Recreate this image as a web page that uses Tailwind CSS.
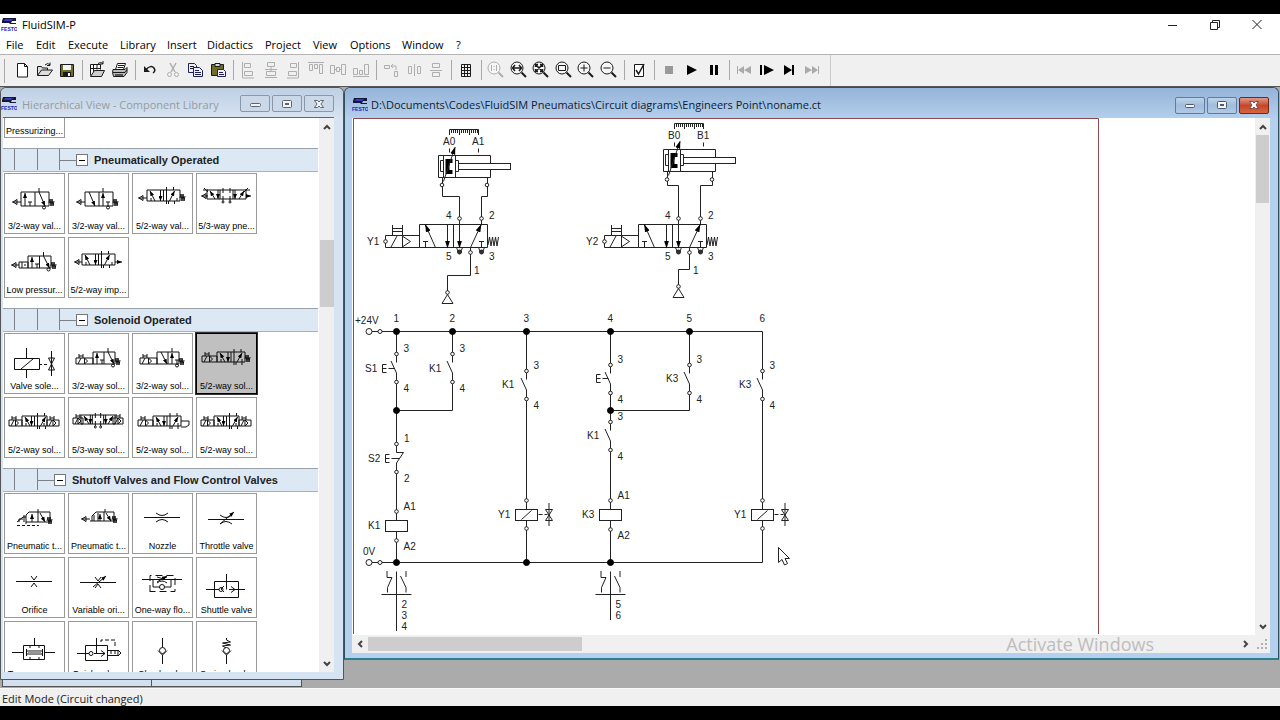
<!DOCTYPE html>
<html lang="en">
<head>
<meta charset="utf-8">
<title>FluidSIM-P</title>
<script src="https://cdn.jsdelivr.net/npm/@tailwindcss/browser@4"></script>
</head>
<body class="flex h-screen flex-col overflow-hidden bg-black py-[14px] font-['Open_Sans','Noto_Sans',sans-serif] text-[11px] leading-4 text-[#222]">

<svg class="absolute size-0">
  <defs>
    <symbol id="logo" viewBox="0 0 16 16">
      <path d="M2 1H15V4H11L10 6H15V7H9L8 6H1V4Z" fill="#16163c"/>
      <path d="M4 2H12L10 4H3Z" fill="#3a3ab8"/>
      <text x="0" y="14" font-family="Liberation Sans, sans-serif" font-size="5" font-weight="700" fill="#2020c8">FESTO</text>
    </symbol>
    <marker id="arr" viewBox="0 0 8 6" refX="7" refY="3" markerWidth="8" markerHeight="6" markerUnits="userSpaceOnUse" orient="auto"><path d="M0 0.500L8 3L0 5.500Z" fill="#000" stroke="none"/></marker>
    <marker id="tip" viewBox="0 0 5 4" refX="5" refY="2" markerWidth="5" markerHeight="4" markerUnits="userSpaceOnUse" orient="auto"><path d="M0 0L5 2L0 4Z" fill="#000" stroke="none"/></marker>
  </defs>
</svg>

<header class="flex h-[21px] shrink-0 items-center bg-white pl-[1px]">
  <svg class="size-4 shrink-0"><use href="#logo"/></svg>
  <h1 class="ml-[5px] flex-1 text-black">FluidSIM-P</h1>
  <div class="flex gap-[28px] pr-[16px] text-[#222]">
    <button aria-label="Minimize" class="size-[14px]"><svg viewBox="0 0 14 14" class="size-[14px]"><path d="M2 7.500H11" stroke="currentColor"/></svg></button>
    <button aria-label="Restore" class="size-[14px]"><svg viewBox="0 0 14 14" class="size-[14px]" fill="none" stroke="currentColor"><path d="M2.500 4.500h7v7h-7zM4.500 4V2.500h7v7H10"/></svg></button>
    <button aria-label="Close" class="size-[14px]"><svg viewBox="0 0 14 14" class="size-[14px]" fill="none" stroke="currentColor"><path d="M2.500 2l9 9M11.500 2l-9 9"/></svg></button>
  </div>
</header>

<nav class="flex h-[19px] shrink-0 items-center bg-white pl-[6px] text-black" id="menu"></nav>

<div class="flex h-[33px] shrink-0 items-center border-t border-b border-t-[#b4b4b4] border-b-[#555] bg-[#f0f0f0] pl-1" role="toolbar" aria-label="Tools">
  <div class="h-6 w-px bg-[#a8a8a8]"></div>
  <div id="tools" class="ml-[6px] flex h-full items-center pb-[2px]"></div>
  <div class="ml-[7px] h-full w-px bg-[#ccc]"></div>
</div>

<main class="relative min-h-0 flex-1 bg-[#ababab]">
  <div class="absolute bottom-[1px] left-[2px] flex h-2">
    <div class="w-[150px] border border-[#555] bg-[#d3e0f0]"></div>
    <div class="w-[150px] border border-l-0 border-[#555] bg-[#d3e0f0]"></div>
  </div>

  <section class="absolute bottom-2 left-0 top-0 flex w-[344px] flex-col rounded-t-md border border-[#555] bg-[#d6e3f2] pb-[7px] pl-[2px] pr-[9px]">
    <div class="-ml-[2px] -mr-[9px] flex h-[29px] shrink-0 items-center rounded-t-md bg-linear-to-b from-[#bfd0e4] to-[#d5e2f0] pr-[9px]">
      <svg class="mt-[2px] size-4 shrink-0"><use href="#logo"/></svg>
      <h2 class="ml-[5px] mt-1 flex-1 whitespace-nowrap text-[#969ba3]">Hierarchical View - Component Library</h2>
      <div class="mt-[2px] flex gap-[2px] text-[#5a6472]">
        <button aria-label="Minimize" class="flex h-[17px] w-[30px] items-center justify-center rounded-xs border border-[#8a98aa] bg-[#cbd8e8]"><svg class="h-3 w-4" viewBox="0 0 16 12" fill="#f4f4f4" stroke="currentColor"><rect x="3.500" y="5.500" width="10" height="3" rx="1"/></svg></button>
        <button aria-label="Maximize" class="flex h-[17px] w-[30px] items-center justify-center rounded-xs border border-[#8a98aa] bg-[#cbd8e8]"><svg class="h-3 w-4" viewBox="0 0 16 12" fill="#f4f4f4" stroke="currentColor"><rect x="3.500" y="2.500" width="9" height="7" rx="1"/><rect x="6.500" y="5.500" width="3" height="1"/></svg></button>
        <button aria-label="Close" class="flex h-[17px] w-[30px] items-center justify-center rounded-xs border border-[#8a98aa] bg-[#cbd8e8]"><svg class="h-3 w-4" viewBox="0 0 16 12" fill="#f4f4f4" stroke="currentColor"><path d="M3.500 2.500h3l1.500 1.500 1.500-1.500h3L10 6l2.500 3.500h-3L8 8 6.500 9.500h-3L6 6z"/></svg></button>
      </div>
    </div>
    <div class="flex min-h-0 flex-1 border-t border-t-[#666] bg-white">
      <div id="library" class="min-w-0 flex-1 overflow-hidden"></div>
      <div class="flex w-[15px] shrink-0 flex-col items-center bg-[#f0f0f0] text-[#444]">
        <button aria-label="Scroll up" class="flex h-[17px] items-center"><svg class="h-2 w-2" viewBox="0 0 8 8" fill="none" stroke="currentColor" stroke-width="2"><path d="M1 6l3-3 3 3"/></svg></button>
        <div class="mt-[105px] h-[67px] w-[14px] bg-[#cdcdcd]"></div>
        <button aria-label="Scroll down" class="mt-auto flex h-[17px] items-center"><svg class="h-2 w-2" viewBox="0 0 8 8" fill="none" stroke="currentColor" stroke-width="2"><path d="M1 2l3 3 3-3"/></svg></button>
      </div>
    </div>
  </section>

  <section class="absolute bottom-[28px] left-[344px] right-[1px] top-0 flex flex-col rounded-t-md border border-b-2 border-[#31505c] border-b-[#2c7f8c] bg-[#b5d0ee] pb-[5px] pl-[7px] pr-[8px]">
    <div class="-ml-[7px] -mr-[8px] flex h-[30px] shrink-0 items-center rounded-t-md bg-linear-to-b from-[#94b3d8] to-[#b4cfec] pl-[7px] pr-[9px]">
      <svg class="mt-1 size-4 shrink-0"><use href="#logo"/></svg>
      <h2 class="ml-[3px] mt-1 flex-1 whitespace-nowrap text-[#101c30]">D:\Documents\Codes\FluidSIM Pneumatics\Circuit diagrams\Engineers Point\noname.ct</h2>
      <div class="mt-1 flex gap-[2px] text-[#4a5a70]">
        <button aria-label="Minimize" class="flex h-[17px] w-[30px] items-center justify-center rounded-xs border border-[#5f7c9e] bg-linear-to-b from-[#bdd3ea] via-[#a0bddc] to-[#b0cae6]"><svg class="h-3 w-4" viewBox="0 0 16 12" fill="#f4f4f4" stroke="currentColor"><rect x="3.500" y="5.500" width="9" height="3" rx="1"/></svg></button>
        <button aria-label="Maximize" class="flex h-[17px] w-[30px] items-center justify-center rounded-xs border border-[#5f7c9e] bg-linear-to-b from-[#bdd3ea] via-[#a0bddc] to-[#b0cae6]"><svg class="h-3 w-4" viewBox="0 0 16 12" fill="#f4f4f4" stroke="currentColor"><rect x="3.500" y="2.500" width="9" height="7" rx="1"/><rect x="6.500" y="5.500" width="3" height="1"/></svg></button>
        <button aria-label="Close" class="flex h-[17px] w-[30px] items-center justify-center rounded-xs border border-[#702818] bg-linear-to-b from-[#e0988a] via-[#c84428] to-[#d8663f]"><svg class="h-3 w-4" viewBox="0 0 16 12" fill="#fff" stroke="#7a4a48"><path d="M3.500 2.500h3l1.500 1.500 1.500-1.500h3L10 6l2.500 3.500h-3L8 8 6.500 9.500h-3L6 6z"/></svg></button>
      </div>
    </div>
    <div class="flex min-h-0 flex-1 bg-white">
      <div class="min-w-0 flex-1 overflow-hidden" id="canvas"></div>
      <div class="flex w-[15px] shrink-0 flex-col items-center bg-[#f0f0f0] text-[#444]">
        <button aria-label="Scroll up" class="flex h-[17px] items-center"><svg class="h-2 w-2" viewBox="0 0 8 8" fill="none" stroke="currentColor" stroke-width="2"><path d="M1 6l3-3 3 3"/></svg></button>
        <div class="h-[68px] w-[13px] bg-[#cdcdcd]"></div>
        <button aria-label="Scroll down" class="mt-auto flex h-4 items-center"><svg class="h-2 w-2" viewBox="0 0 8 8" fill="none" stroke="currentColor" stroke-width="2"><path d="M1 2l3 3 3-3"/></svg></button>
      </div>
    </div>
    <div class="relative flex h-[18px] shrink-0 items-center bg-[#f0f0f0] text-[#444]">
      <button aria-label="Scroll left" class="flex w-4 justify-center"><svg class="h-2 w-2" viewBox="0 0 8 8" fill="none" stroke="currentColor" stroke-width="2"><path d="M6 1L3 4l3 3"/></svg></button>
      <div class="h-[14px] w-[214px] bg-[#cdcdcd]"></div>
      <button aria-label="Scroll right" class="ml-auto flex w-4 justify-center"><svg class="h-2 w-2" viewBox="0 0 8 8" fill="none" stroke="currentColor" stroke-width="2"><path d="M2 1l3 3-3 3"/></svg></button>
      <svg class="ml-[2px] h-3 w-[14px]" viewBox="0 0 14 12" fill="#b0b0b0"><path d="M9 1h2v2H9zM9 5h2v2H9zM9 9h2v2H9zM5 5h2v2H5zM5 9h2v2H5zM1 9h2v2H1z"/></svg>
      <p class="absolute right-[116px] top-[-3px] whitespace-nowrap text-[18px] leading-6 text-[#bdbdbd]">Activate Windows</p>
    </div>
  </section>
</main>

<footer class="flex h-[18px] shrink-0 items-center border-t border-[#fafafa] bg-[#f0f0f0] pl-[2px] pt-[3px] text-[#222]">Edit Mode (Circuit changed)</footer>

<script>
// ---------- menu ----------
const menu = [['File',30],['Edit',32],['Execute',52],['Library',47],['Insert',40],['Didactics',58],['Project',48],['View',37],['Options',52],['Window',54],['?',12]];
document.getElementById('menu').innerHTML = menu.map(([t, w]) =>
  `<button class="shrink-0 whitespace-nowrap text-left" style="width:${w}px">${t}</button>`).join('');

// ---------- toolbar ----------
const K = '#1a1a1a', G = '#aeaeae';
const s = (d, c = K, f = 'none', w = 1) => `<path d="${d}" stroke="${c}" fill="${f}" stroke-width="${w}"/>`;
const f = (d, c = K) => `<path d="${d}" fill="${c}"/>`;
const zoom = (inner, c = K) => `<circle cx="7" cy="7" r="6" stroke="${c}" fill="#f6f6f6"/>` + s('M11.500 11.500L16 16', c, 'none', 2) + inner;
const groups = [
  [['New', s('M4.500 2.500h7l3 3v10.500h-10zM11.500 2.500v3h3', K, '#fff')],
   ['Open', s('M1.500 14.500v-9h4l1 1.500h5v2M1.500 14.500l4-5.500h11l-4 5.500z', K, '#ddd') + s('M9 4q3-3 5 0M14 1.500V4.500H11')],
   ['Save', s('M2.500 3.500h13v12h-13z', K, '#6e6e2a') + f('M5 4h8v5H5z', '#f4f4f4') + f('M5 11h8v5H5z') + f('M10 12h2v3h-2z', '#fff')]],
  [['Preview', s('M2.500 14.500v-11h10v5M5.500 3.500v8M9 3.500v5M2.500 7.500h10', K, '#fff') + s('M2.500 15.500l4-6h10l-3 6z', K, '#ccc') + s('M10 2.500q3-2 5 0M15 0v3h-3')],
   ['Print', s('M4.500 8.500l2-6h8l-2 6', K, '#fff') + s('M2 8.500h12l2-2v5l-3 4H2.500l-1-4z', K, '#bbb') + s('M7 4.500h6M6.500 6.500h6M2 11.500h12M14 11.500l2-3') + f('M4 13h8v2H4z', '#555')]],
  [['Undo', s('M5 8.500q5-5 8-1.500q2 3-1 5', K, 'none', 1.500) + f('M3 5v6h6z')],
   ['Cut', s('M6 2l5 9M12 2L7 11', G, 'none', 1.500) + `<circle cx="5.500" cy="13.500" r="2" fill="none" stroke="${G}"/><circle cx="12.500" cy="13.500" r="2" fill="none" stroke="${G}"/>`],
   ['Copy', s('M2.500 2.500h6l2 2v7h-8z', '#22225a', '#eef') + s('M4 5.500h4M4 7.500h5') + s('M7.500 6.500h6l3 3v6h-9z', '#22225a', '#eef') + s('M9 9.500h4M9 11.500h6M9 13.500h6', '#22225a')],
   ['Paste', s('M2.500 3.500h12v11h-12z', K, '#6e6e2a') + s('M6 2.500h5v3H6z', K, '#ddd') + s('M8.500 8.500h6l2 2v5h-8z', '#22225a', '#eef') + s('M10 11.500h4M10 13.500h5', '#22225a')]],
  [['Align left', s('M3.500 1v16H15M5.500 2.500h6v4h-6zM5.500 10.500h8v4h-8z', G)],
   ['Align centre', s('M5.500 1.500h7v4h-7zM4.500 10.500h9v4h-9zM9 6v4M3 8.500h12M3 16.500h12', G)],
   ['Align right', s('M14.500 1v16H3M6.500 2.500h6v4h-6zM4.500 10.500h8v4h-8z', G)],
   ['Align top', s('M1 1.500h16M2.500 3.500h3v6h-3zM7.500 3.500h3v4h-3zM12.500 3.500h3v9h-3z', G)],
   ['Align middle', s('M1.500 4.500h4v8h-4zM7.500 6.500h3v4h-3zM12.500 3.500h4v10h-4zM6 8.500h1M11 8.500h1', G)],
   ['Align bottom', s('M1 15.500h16M1.500 7.500h4v6h-4zM7.500 9.500h3v4h-3zM12.500 3.500h4v10h-4z', G)]],
  [['Rotate', s('M2.500 4.500h5v3h-5zM12.500 10.500h3v5h-3zM9 5h5v4M11 3L9 5l2 2', G)],
   ['Mirror vertical', s('M3.500 5.500h3v7h-3zM12.500 5.500h3v7h-3zM9.500 3v12', G)],
   ['Mirror horizontal', s('M5.500 2.500h7v4h-7zM5.500 11.500h7v4h-7zM3 9.500h12', G)]],
  [['Grid', s('M4.500 3.500h9v12h-9zM4.500 6.500h9M4.500 9.500h9M4.500 12.500h9M7.500 3.500v12M10.500 3.500v12')]],
  [['Zoom 1:1', zoom(s('M4.500 4v6M9.500 4v6M7 5v1M7 8v1', G), G)],
   ['Zoom previous', zoom(s('M3 7h8M5 4L2.500 7 5 10M9 4l2.500 3L9 10', K, 'none', 1.500))],
   ['Fit window', zoom(s('M4 4l6 6M10 4l-6 6M3.500 6V3.500H6M8 3.500h2.500V6M10.500 8v2.500H8M6 10.500H3.500V8', K, 'none', 1.500))],
   ['Zoom region', zoom(s('M3.500 4.500h7v5h-7z'))],
   ['Zoom in', zoom(s('M3.500 7h7M7 3.500v7'))],
   ['Zoom out', zoom(s('M3.500 7h7'))]],
  [['Check', s('M4.500 3.500h9v12h-9z', K, '#fff') + s('M6 9l2.500 4L14 3', K, 'none', 1.500)]],
  [['Stop', f('M5 5h8v8H5z', '#999')], ['Start', f('M4 4l10 5-10 5z', '#000')], ['Pause', f('M5 4h3v10H5zM10 4h3v10h-3z', '#000')]],
  [['Rewind', f('M2 5h1v8H2zM3 9l6-4v8zM9 9l7-4v8z', '#aaa')], ['Step', f('M2 4h2v10H2zM6 4l10 5-10 5z', '#000')],
   ['Next', f('M4 4l8 5-8 5zM12 4h2v10h-2z', '#000')], ['End', f('M2 5l7 4-7 4zM9 5l6 4-6 4zM15 5h1v8h-1z', '#aaa')]],
];
const gw = { 1: 22, 2: 45, 3: 67, 4: 90, 6: 135 };
document.getElementById('tools').innerHTML = groups.map(g =>
  `<div class="flex justify-between" style="width:${gw[g.length]}px">` + g.map(([n, p]) =>
    `<button aria-label="${n}" class="flex h-6 w-[22px] items-center justify-center"><svg class="size-[18px]" viewBox="0 0 18 18">${p}</svg></button>`).join('') + '</div>'
).join('<div class="flex w-2 justify-center"><div class="h-5 w-px bg-[#a8a8a8]"></div></div>');

// ---------- valve symbols for the library thumbnails ----------
const box = (x, y, w, h) => `M${x} ${y}h${w}v${h}h${-w}z`;
const P = d => `<path d="${d}"/>`;
const A = d => `<path d="${d}" marker-end="url(#tip)"/>`;
const spring = (x, y) => P(`M${x} ${y}l1-4 1 7 1-7 1 7 1-5`);
const pilot = (x, y, w) => P(`M${x - w} ${y}h${w}M${x - w + 1} ${y}l4-2.500v5z`);
const sol = (x, y, w) => P(box(x, y, w, 6) + `M${x + 2} ${y + 6}l3-6M${x + w / 2} ${y}v6l3-3-3-3M${x + 3} ${y}v-4M${x + 7} ${y}v-4M${x + 3} ${y - 2}h4`);
const two = (x, y, w, h, flip) => { const m = x + w / 2, a = flip ? m : x, b = flip ? x : m;
  return P(box(x, y, w, h) + `M${m} ${y}v${h}M${m + 4} ${y - 4}v4M${a + 9} ${y + h}v-4m-2 0h4`) + A(`M${a + 4} ${y + h}V${y + 1}`) + A(`M${b + 4} ${y}L${b + 10} ${y + h}`) +
    `<circle cx="${m + 9}" cy="${y + h + 1.500}" r="1.500"/>`; };
const five = (x, y, w, h) => { const m = x + w / 2;
  return P(box(x, y, w, h) + `M${m} ${y}v${h}M${m + 3} ${y - 3}v${h + 6}M${m + 10} ${y - 3}v3M${m + 5} ${y + h}v3M${m + 11} ${y + h}v3M${x + 4} ${y + h}v-3M${x + w - 3} ${y + h}v-3`) +
    A(`M${x + 8} ${y + h}L${x + 3} ${y + 1}`) + A(`M${m - 3} ${y}v${h}`) + A(`M${m + 6} ${y + h}L${m + 11} ${y + 1}`); };
const three = (x, y, w, h) => { const t = w / 3;
  return P(box(x, y, w, h) + `M${x + t} ${y}v${h}M${x + 2 * t} ${y}v${h}M${x + t + 3} ${y - 2}v5M${x + 2 * t - 3} ${y - 2}v5M${x + t + 3} ${y + h + 2}v-5M${x + 2 * t - 3} ${y + h + 2}v-5`) +
    A(`M${x + 8} ${y + h}L${x + 3} ${y + 1}`) + A(`M${x + t - 2} ${y}v${h}`) + A(`M${x + 2 * t + 2} ${y}v${h}`) + A(`M${x + w - 7} ${y + h}L${x + w - 2} ${y + 1}`) +
    `<circle cx="${x + t + 3}" cy="${y + h + 3}" r="1"/><circle cx="${x + 2 * t - 3}" cy="${y + h + 3}" r="1"/>`; };
const icons = {
  v32a: pilot(17, 29, 9) + two(17, 19, 28, 14) + spring(45, 30),
  v32b: pilot(17, 29, 9) + two(17, 19, 28, 14, true) + spring(45, 30),
  v52: pilot(15, 25, 9) + five(15, 17, 33, 11) + spring(48, 25),
  v53: pilot(12, 23, 7) + three(11, 17, 39, 9) + A('M50 23h5') + P('M8 15l4 4M52 15l-4 4M7 17h5M49 17h5'),
  lowp: pilot(15, 28, 8) + P('M15 25h9v6h-9zM18 25v6M21 27v2') + two(24, 19, 23, 12) + spring(47, 29),
  imp: pilot(14, 25, 8) + five(14, 17, 33, 11) + A('M47 25h7'),
  sole: P('M10.500 25.500h25v11h-25zM17 36l12-10M22.500 15v10M22.500 37v8M36 31.500h2M40 31.500h3M47.500 18v25M44.500 25h6l-6 12h6z'),
  s32a: sol(8, 25, 17) + two(25, 19, 22, 12) + spring(47, 29),
  s32b: sol(8, 25, 17) + two(25, 19, 22, 12, true) + spring(47, 29),
  s52: sol(6, 23, 15) + five(21, 19, 28, 10) + spring(49, 26),
  s52d: sol(5, 23, 13) + five(18, 19, 25, 10) + sol(43, 23, 12),
  s53: sol(5, 21, 10) + three(13, 18, 34, 9) + sol(45, 21, 10),
  s52e: sol(6, 23, 15) + five(21, 19, 28, 10) + P('M49 24h8v4l-3 2h-5'),
  pt1: P('M22 31V22l3-3h21v10H22M34 19v10M13 29l6-5h3M15 29v-3h4M20 22v7') + A('M28 29V21') + A('M36 20l5 9') + P('M34 16v3') + spring(43, 28) + '<path d="M13 32.500h22" stroke-dasharray="3 2"/>',
  pt2: pilot(22, 26, 9) + P('M24 28V23l4-4h18v9H22M36 19v9M26 22v6M30 20v8') + A('M32 28v-7') + A('M38 20l5 8') + P('M37 16v3') + spring(44, 27),
  nozzle: P('M12 24.500h36M24 20q6 5 12 0M24 29q6-5 12 0'),
  throttle: P('M12 26.500h36M24 22q6 5 12 0M24 31q6-5 12 0') + A('M24 31l14-12'),
  orifice: P('M12 24.500h36M27 19l3 4 3-4M27 30l3-4 3 4'),
  variable: P('M12 25.500h36M27 20l3 4 3-4M27 31l3-4 3 4') + A('M25 30l13-11'),
  oneway: P('M10 22.500h40M21 22v8h18v-8M25 20q5 3 10 0M25 26q5-4 10 0') + A('M25 25l10-6') + '<circle cx="30" cy="30" r="2.500" fill="#fff"/><path d="M18 35V18.500h25V34.500H18" stroke-dasharray="7 4"/>',
  shuttle: P('M18.500 24.500h24v16h-24zM10 32.500h13M33 32.500h16M30.500 17v15.500M35 29.500l4 3-4 3M28 29l-3 3 3 3') + '<circle cx="25" cy="32.500" r="2"/>',
  two: P('M19.500 24.500h21v14h-21zM8 31.500h11M41 31.500h10M30.500 17v7M22.500 28v7M38.500 28v7M22 30h16M22 33h16M26 24v3M35 24v3M26 36v3M35 36v3') + '<path d="M24 31.500h13" stroke="#999" stroke-width="2"/>',
  quick: P('M17.500 24.500h22v15h-22zM9 32.500h12M28.500 17v15M26 32.500h11M33 29.500l4 3-4 3M40 29.500h10v5H40M50 29l3 3-3 3M43 30v3M47 30v3') + '<circle cx="23" cy="32.500" r="2"/><path d="M33 21v-2h14v8" stroke-dasharray="4 2"/>',
  check: P('M30.500 17v10M30.500 34v9M26 29.500l4.500 4.500 4.500-4.500') + '<circle cx="30.500" cy="29.500" r="3" fill="#fff"/>',
  check2: P('M30.500 17v2l4 2-8 1 8 2-8 1 4 2M30.500 34v9M26 29.500l4.500 4.500 4.500-4.500') + '<circle cx="30.500" cy="29.500" r="3" fill="#fff"/>',
};
const header = (title, depth) => {
  let lines = '';
  for (let i = 0; i < depth; i++) lines += `M${Math.round(11 + i * 22.500) + .5} 0V21`;
  const x = Math.round(11 + (depth - 1) * 22.500);
  return `<div class="mr-[1px] flex h-6 items-center border-y border-[#9aa0a8] border-b-[#a8b0ba] bg-[#dce9f5]">
    <svg class="h-full shrink-0" style="width:${x + 17}px" stroke="#7a828c" fill="none"><path d="${lines}M${x} 11.500h17"/></svg>
    <button aria-label="Collapse ${title}" class="flex size-3 shrink-0 items-center justify-center border border-[#777] bg-white"><span class="h-px w-[6px] bg-black"></span></button>
    <h3 class="ml-[6px] whitespace-nowrap font-['Liberation_Sans',sans-serif] text-[11px] font-bold leading-4">${title}</h3></div>`;
};
const cell = ([label, icon, sel]) => `<button class="flex h-[61px] w-[61px] flex-col items-center border ${sel ? 'border-black bg-[#c0c0c0] outline outline-[#333]' : 'border-[#999] bg-white'}">
  <svg class="h-[46px] w-full shrink-0" viewBox="1 1 59 46" fill="none" stroke="#111">${icons[icon]}</svg>
  <span class="whitespace-nowrap font-['Liberation_Sans',sans-serif] text-[9px] leading-3 text-black">${label}</span></button>`;
const section = (title, depth, cells) => header(title, depth) + `<div class="mb-[10px] mt-[1px] grid grid-cols-[repeat(4,61px)] gap-[3px] pl-[1px]">${cells.map(cell).join('')}</div>`;
document.getElementById('library').innerHTML =
  `<div class="mb-[10px] ml-[1px] flex h-[20px] w-[61px] items-end justify-center border border-t-0 border-[#999] font-['Liberation_Sans',sans-serif] text-[9px] leading-3 text-black">Pressurizing...</div>` +
  section('Pneumatically Operated', 3, [['3/2-way val...', 'v32a'], ['3/2-way val...', 'v32b'], ['5/2-way val...', 'v52'], ['5/3-way pne...', 'v53'], ['Low pressur...', 'lowp'], ['5/2-way imp...', 'imp']]) +
  section('Solenoid Operated', 3, [['Valve sole...', 'sole'], ['3/2-way sol...', 's32a'], ['3/2-way sol...', 's32b'], ['5/2-way sol...', 's52', true], ['5/2-way sol...', 's52d'], ['5/3-way sol...', 's53'], ['5/2-way sol...', 's52e'], ['5/2-way sol...', 's52d']]) +
  section('Shutoff Valves and Flow Control Valves', 2, [['Pneumatic t...', 'pt1'], ['Pneumatic t...', 'pt2'], ['Nozzle', 'nozzle'], ['Throttle valve', 'throttle'], ['Orifice', 'orifice'], ['Variable ori...', 'variable'], ['One-way flo...', 'oneway'], ['Shuttle valve', 'shuttle'], ['Two pressu...', 'two'], ['Quick exha...', 'quick'], ['Check valve', 'check'], ['Spring load...', 'check2']]);

// ---------- circuit diagram ----------
const T = (x, y, t) => `<text x="${x}" y="${y}">${t}</text>`;
const C = (x, y, r = 1.800) => `<circle cx="${x}" cy="${y}" r="${r}" fill="#fff"/>`;
const D = (x, y) => `<circle cx="${x}" cy="${y}" r="3" fill="#000" stroke="#000"/>`;
const R = (d) => `<path d="${d}" marker-end="url(#arr)"/>`;
let ruler = 'M449.500 135V129.500H478.500V135';
for (let x = 451.500; x < 478; x += 2) ruler += `M${x} 129v${x === 459.500 || x === 469.500 ? 6 : 4}`;
const cylinder = (dx, dy, n) => `<g transform="translate(${dx} ${dy})">` + P(ruler + 'M449.500 148.500v4M478.500 148.500v4') +
  P(box(438.500, 155.500, 52, 22) + 'M443.500 155.500v22M455.500 155.500v22' + box(440.500, 160.500, 3, 11) + box(455.500, 160.500, 3, 11)) +
  `<rect x="458.500" y="163.500" width="52" height="6" fill="#fff"/><path d="M445.500 159h7v4h-3v7h3v4h-7z" fill="#000" stroke="none"/>` +
  R('M443.500 181.500L455 147.500') + T(443, 145, n + '0') + T(472, 145, n + '1') + '</g>';
const exhaust = x => `<path d="M${x - 3} 247.500l2 5h2l2-5" /><circle cx="${x}" cy="252" r="2" fill="#333"/>`;
const valve = (dx, n) => `<g transform="translate(${dx} 0)">` +
  P(box(419.500, 224.500, 68, 23) + 'M453.500 224.500v23M425.500 247.500v-6m-2.500 0h5M481.500 247.500v-6m-2.500 0h5') +
  R('M435.500 247.500L425.500 225') + R('M447.500 225V247.500') + R('M459.500 225V247.500') + R('M470.500 247.500L481 225') +
  P('M488 245l1.500-8 1.500 9 1.500-9 1.500 9 1.500-9 1.500 9 1.500-9') +
  P('M419.500 235.500h-34v12h34M402.500 235.500v12M391 247l6-11M403 236.500l7.500 5-7.500 5M392.500 225v10M402.500 225v10M392.500 228.500h10M392.500 231.500h10') +
  C(385.500, 241.500) + exhaust(459.500) + exhaust(481.500) + C(459.500, 218.500) + C(481.500, 218.500) +
  T(367, 245, n) + T(446, 219, 4) + T(489, 219, 2) + T(446, 260, 5) + T(489, 260, 3) + T(474, 274, 1) + '</g>';
const source = (x, y) => C(x, y - 8) + P(`M${x} ${y - 6}l-5.500 9h11z`);
const contact = (x, y) => P(`M${x} ${y}v8.500M${x - 5.500} ${y + 7}L${x} ${y + 19}v9`) + C(x, y) + C(x, y + 28) + T(x + 7, y - 2, 3) + T(x + 7, y + 38, 4);
const actuator = (x, y, w) => P(`M${x + 4} ${y - 4}h-4v8h4M${x} ${y}h4`) + P(`M${x + 6} ${y}h${w}`);
const coil = (x, y) => `<rect x="${x - 11}" y="${y}" width="22" height="11" fill="#fff"/>` + C(x, y - 9) + C(x, y + 20) + T(x + 7, y - 11, 'A1') + T(x + 7, y + 29, 'A2');
const solenoid = x => `<rect x="${x - 11}" y="509.500" width="22" height="11" fill="#fff"/>` + C(x, 500.500) + C(x, 528.500) +
  P(`M${x - 5} 519.500l10-9M${x + 12} 514.500h4M${x + 18} 514.500h3M${x + 22.500} 503v23M${x + 19} 509.500h7l-7 11h7z`);
const list = (x, end, nums) => P(`M${x} 571.500V${end}M${x - 15} 594.500h30M${x - 9.500} 571v6.500h5l-4.500 10v5M${x + 9.500} 571v6M${x + 4} 576l5.500 11.500v5`) +
  nums.map((n, i) => T(x + 5, 608 + i * 11, n)).join('');
const a = 396.500, b = 452.500, c = 526.500, d = 610.500, e = 689.500, g = 762.500;
document.getElementById('canvas').innerHTML = `
<svg class="block h-[516px] w-[902px] max-w-none" viewBox="352 118 902 516" fill="none" stroke="#222" role="img" aria-label="Circuit diagram">
  <path d="M353.500 640V118.500H1098.500V640" stroke="#8c4a50"/>
  <g class="font-['Liberation_Sans',sans-serif] text-[10px] [&_text]:fill-[#222] [&_text]:stroke-none">
  ${P('M442.500 177.500V196.500H459.500V225M487.500 177.500V196.500H481.500V225M470.500 247.500V275.500H447.500V294')}
  ${P('M667.500 171.500V185.500H678.500V225M712.500 171.500V185.500H700.500V225M689.500 247.500V269.500H678.500V288')}
  ${cylinder(0, 0, 'A')}${cylinder(225, -6, 'B')}
  ${C(442, 185)}${C(487, 185)}${C(667, 179.500)}${C(712, 179.500)}
  ${valve(0, 'Y1')}${valve(219, 'Y2')}${C(470.500, 252.500)}${C(689.500, 252.500)}
  ${source(447.500, 300.500)}${source(678.500, 294.500)}
  ${P(`M369 331.500H${g}V371M369 562.500H${g}V399`)}
  ${C(369, 331.500, 3)}${C(380, 331.500, 2)}${C(369, 562.500, 3)}${C(380, 562.500, 2)}
  ${T(355, 324, '+24V')}${T(363, 555, '0V')}
  ${[[a, 1], [b, 2], [c, 3], [d, 4], [e, 5], [g, 6]].map(([x, n]) => T(x - 3, 322, n)).join('')}
  ${P(`M${a} 331.500V354M${a} 382V444M${a} 472V562.500M${b} 331.500V354M${b} 382V410.500H${a}`)}
  ${P(`M${c} 331.500V371M${c} 399V562.500M${d} 331.500V365M${d} 393V422M${d} 450V562.500M${e} 331.500V365M${e} 393V410.500H${d}`)}
  ${contact(a, 354)}${contact(b, 354)}${contact(c, 371)}${contact(d, 365)}${contact(e, 365)}${contact(g, 371)}${contact(d, 422)}
  ${actuator(382.500, 368.500, 6)}${actuator(596.500, 378.500, 6)}${actuator(385.500, 458.500, 8)}
  ${P(`M${a} 444v8.500h7L${a} 463v9`)}${C(a, 444)}${C(a, 472)}${T(404, 442, 1)}${T(404, 482, 2)}
  ${coil(a, 520.500)}${coil(d, 509.500)}${solenoid(c)}${solenoid(g)}
  ${[[a, 331.500], [b, 331.500], [c, 331.500], [d, 331.500], [e, 331.500], [a, 410.500], [d, 410.500], [a, 562.500], [c, 562.500], [d, 562.500]].map(p => D(...p)).join('')}
  ${T(365, 372, 'S1')}${T(429, 372, 'K1')}${T(502, 388, 'K1')}${T(368, 462, 'S2')}${T(368, 529, 'K1')}${T(498, 518, 'Y1')}
  ${T(587, 439, 'K1')}${T(582, 518, 'K3')}${T(666, 382, 'K3')}${T(739, 388, 'K3')}${T(734, 518, 'Y1')}
  ${list(a, 631, [2, 3, 4])}${list(d, 620, [5, 6])}
  </g>
  <path d="M778.500 547.500v15l3.500-3 2.500 5.500 3-1.500-2.500-5h4.500z" fill="#fff"/>
</svg>`;
</script>
</body>
</html>
